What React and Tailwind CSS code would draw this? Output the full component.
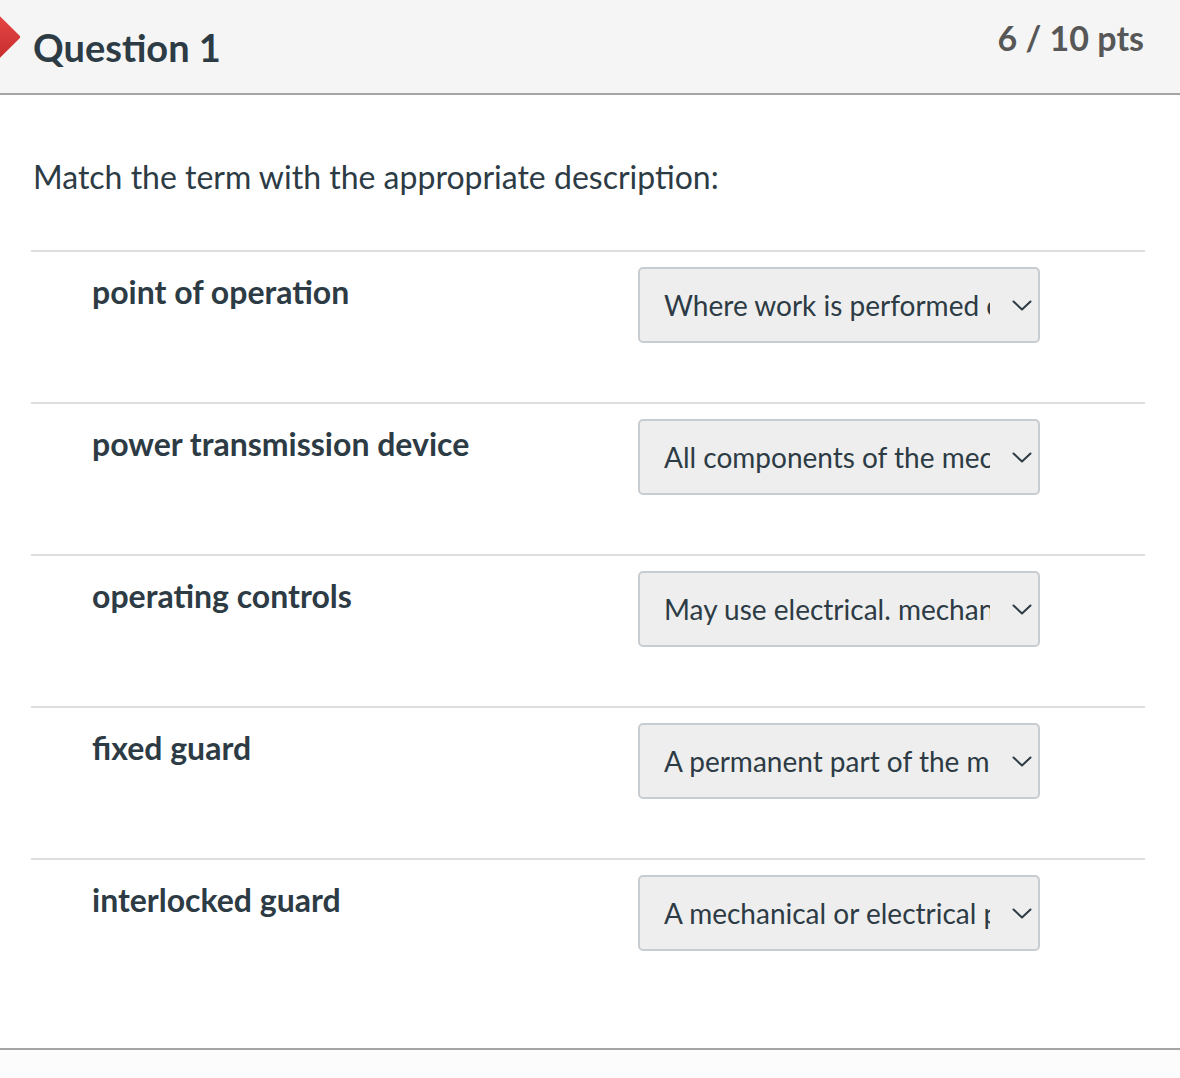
import React from "react";

const rows = [
  ["point of operation", "Where work is performed on the material"],
  ["power transmission device", "All components of the mechanical system"],
  ["operating controls", "May use electrical. mechanical, hydraulic"],
  ["fixed guard", "A permanent part of the machine"],
  ["interlocked guard", "A mechanical or electrical power shutoff"],
];

function Chevron() {
  return (
    <svg width="20" height="11" viewBox="0 0 20 11" className="shrink-0">
      <path d="M1.5 1.5 L10 9.5 L18.5 1.5" fill="none" stroke="#2d3b45" strokeWidth="2" strokeLinecap="round" strokeLinejoin="round" />
    </svg>
  );
}

export default function App() {
  return (
    <div className="w-[1180px] h-[1078px] bg-white overflow-hidden" style={{ fontFamily: "Lato, 'Noto Sans', sans-serif" }}>
      <div className="relative h-[95px] bg-[#f5f5f5] border-b-2 border-[#a5a5a5] flex justify-between items-start pl-[33px] pr-[36px] overflow-hidden">
        <div className="absolute left-[-25px] top-[18px] w-[38px] h-[38px] rotate-45 bg-gradient-to-br from-[#e84848] to-[#c42a2a] rounded-[2px]" />
        <div className="pt-[23px] text-[38px] leading-[48px] font-bold text-[#2d3b45]">Question 1</div>
        <div className="pt-[16px] text-[34px] leading-[44px] font-bold text-[#575757]">6 / 10 pts</div>
      </div>
      <div className="pl-[33px] pt-[62px] text-[32px] leading-[40px] text-[#2d3b45]">
        Match the term with the appropriate description:
      </div>
      <div className="pl-[31px] pr-[35px] mt-[53px]">
        {rows.map(([term, desc]) => (
          <div key={term} className="h-[152px] border-t-2 border-[#dddddd] flex items-start">
            <div className="w-[607px] pl-[61px] pt-[20px] text-[32px] leading-[40px] font-bold text-[#2d3b45]">{term}</div>
            <div className="mt-[15px] w-[402px] h-[76px] rounded-[5px] border-2 border-[#c7cdd1] bg-[#eeeeee] flex items-center pl-[24px] pr-[6px]">
              <span className="w-[328px] overflow-hidden whitespace-nowrap text-[28px] leading-[34px] text-[#2d3b45]">{desc}</span>
              <div className="ml-[22px]"><Chevron /></div>
            </div>
          </div>
        ))}
      </div>
      <div className="mt-[38px] border-t-2 border-[#a5a5a5] h-[40px] bg-[#fcfcfc]" />
    </div>
  );
}
